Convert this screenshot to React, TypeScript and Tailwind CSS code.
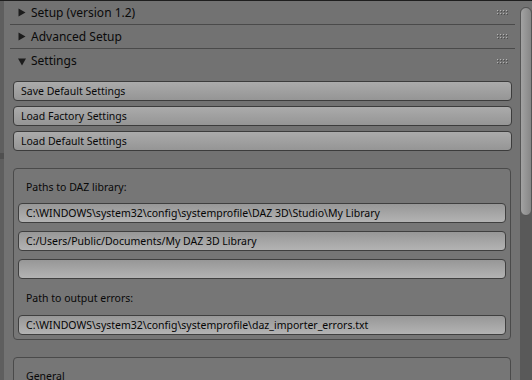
import type { ReactNode } from 'react';

const font = { fontFamily: '"Noto Sans", "Open Sans", sans-serif' };

function Grip() {
  return (
    <svg width="12" height="5" viewBox="0 0 12 5" className="shrink-0">
      {[0, 3, 6, 9].map((x) =>
        [0, 3].map((y) => (
          <g key={`${x}-${y}`}>
            <rect x={x} y={y} width="1" height="1" fill="#b4b4b4" />
            <rect x={x + 1} y={y + 1} width="1" height="1" fill="#4c4c4c" />
          </g>
        ))
      )}
    </svg>
  );
}

function PanelHeader({ title, open, last }: { title: string; open?: boolean; last?: boolean }) {
  return (
    <div
      className={`h-[24px] shrink-0 flex items-center justify-between ${
        last ? '' : 'border-b border-[#4a4a4a]'
      }`}
    >
      <div className="flex items-center pl-[8px] gap-[5px] text-[12px] text-[#0a0a0a]">
        <svg width="8" height="9" viewBox="0 0 8 9" className="shrink-0">
          {open ? <path d="M0 1.5h8L4 8.5z" fill="#1c1c1c" /> : <path d="M0.5 0.5v8l7-4z" fill="#1c1c1c" />}
        </svg>
        <span>{title}</span>
      </div>
      <div className="pr-[6px]">
        <Grip />
      </div>
    </div>
  );
}

function Button({ label }: { label: string }) {
  return (
    <div className="h-[20px] flex items-center px-[7px] pt-[1px] rounded-[4px] border border-[#3c3c3c] bg-gradient-to-b from-[#ababab] to-[#959595] text-[10.5px] text-[#080808]">
      {label}
    </div>
  );
}

function Field({ value }: { value?: string }) {
  return (
    <div className="h-[20px] flex items-center px-[7px] pt-[1px] rounded-[4px] border border-[#3f3f3f] bg-gradient-to-b from-[#979797] to-[#b3b3b3] text-[10.5px] text-[#050505] whitespace-nowrap overflow-hidden">
      {value}
    </div>
  );
}

function Box({ children }: { children: ReactNode }) {
  return (
    <div className="rounded-[4px] border border-[#4a4a4a] bg-[#767676] px-[4px] pt-[8px] pb-[4px] flex flex-col">
      {children}
    </div>
  );
}

function Label({ text }: { text: string }) {
  return <div className="h-[20px] flex items-center pl-[8px] pt-[1px] text-[10.5px] text-[#080808]">{text}</div>;
}

export default function App() {
  return (
    <div
      className="w-[532px] h-[380px] overflow-hidden bg-[#727272] border-t border-[#1e1e1e] flex"
      style={font}
    >
      <div className="w-[4px] shrink-0 bg-[#5e5e5e] flex flex-col">
        <div className="h-[152px]" />
        <div className="h-[6px] bg-[#4f4f4f]" />
      </div>

      <div className="flex-1 flex flex-col pl-[6px] pr-[5px]">
        <PanelHeader title="Setup (version 1.2)" />
        <PanelHeader title="Advanced Setup" />
        <PanelHeader title="Settings" open last />

        <div className="px-[3px] pt-[8px] flex flex-col">
          <div className="flex flex-col gap-[5px]">
            <Button label="Save Default Settings" />
            <Button label="Load Factory Settings" />
            <Button label="Load Default Settings" />
          </div>

          <div className="mt-[17px] mr-[1px]">
            <Box>
              <Label text="Paths to DAZ library:" />
              <div className="mt-[6px] flex flex-col gap-[8px]">
                <Field value="C:\WINDOWS\system32\config\systemprofile\DAZ 3D\Studio\My Library" />
                <Field value="C:/Users/Public/Documents/My DAZ 3D Library" />
                <Field />
              </div>
              <div className="mt-[9px]">
                <Label text="Path to output errors:" />
              </div>
              <div className="mt-[7px]">
                <Field value="C:\WINDOWS\system32\config\systemprofile\daz_importer_errors.txt" />
              </div>
            </Box>
          </div>

          <div className="mt-[17px] mr-[1px]">
            <Box>
              <Label text="General" />
            </Box>
          </div>
        </div>
      </div>

      <div className="w-[12px] shrink-0 pt-[6px] flex flex-col">
        <div className="flex-1 rounded-t-[6px] bg-[#595959]">
          <div className="h-[209px] rounded-[6px] border border-[#555] bg-gradient-to-r from-[#a2a2a2] to-[#878787]" />
        </div>
      </div>
    </div>
  );
}
